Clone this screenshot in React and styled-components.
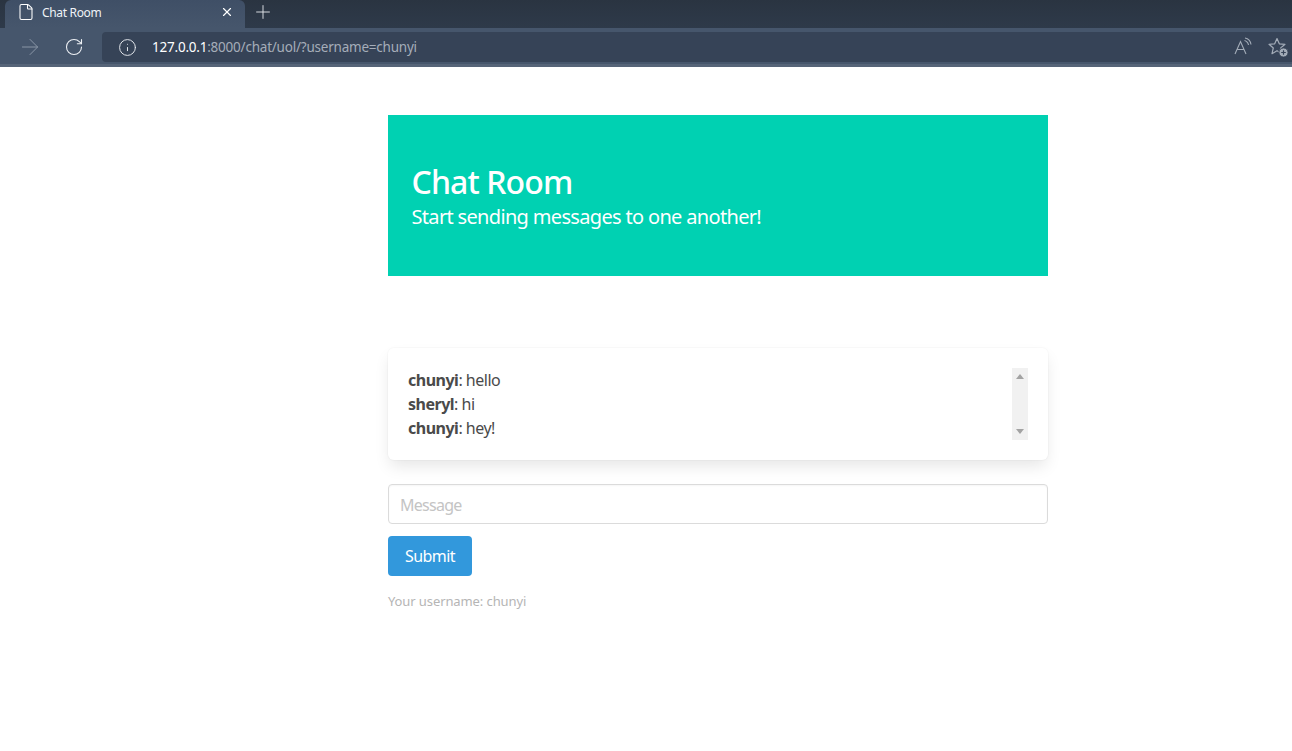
import React from "react"
import styled, { createGlobalStyle } from "styled-components"
import { X, Plus, ArrowRight, RotateCw, Info, File } from "lucide-react"

const App = () => {
  return (
    <>
      <GlobalStyle />
      <Browser>
        <TabStrip>
          <Tab>
            <File size={18} strokeWidth={1.4} />
            <TabTitle>Chat Room</TabTitle>
            <TabClose>
              <X size={14} strokeWidth={2} />
            </TabClose>
          </Tab>
          <NewTab>
            <Plus size={22} strokeWidth={1} />
          </NewTab>
        </TabStrip>
        <Toolbar>
          <NavButton $dim>
            <ArrowRight size={26} strokeWidth={0.9} />
          </NavButton>
          <NavButton>
            <RotateCw size={20} strokeWidth={1.3} />
          </NavButton>
          <AddressBar>
            <Info size={19} strokeWidth={1.2} />
            <Url>
              <UrlHost>127.0.0.1</UrlHost>:8000/chat/uol/?username=chunyi
            </Url>
            <ToolIcons>
              <svg width="20" height="20" viewBox="0 0 20 20" fill="none" stroke="#a3acb8" strokeWidth="1.1">
                <path d="M2 17 L7.5 4.5 L13 17 M4 12.5 H11" />
                <path d="M11.5 3.5 C13.5 4 15 5.5 15.5 8 M12 1 C15 1.5 17.5 4 18 7.5" />
              </svg>
              <svg width="22" height="22" viewBox="0 0 22 22" fill="none">
                <path d="M10 2.5 L12.3 7.8 L18 8.3 L13.7 12 L15 17.7 L10 14.7 L5 17.7 L6.3 12 L2 8.3 L7.7 7.8 Z" stroke="#a3acb8" strokeWidth="1.2" strokeLinejoin="round" />
                <circle cx="16.5" cy="16.5" r="4.6" fill="#a3acb8" stroke="#364357" strokeWidth="1" />
                <path d="M16.5 14.2 V18.8 M14.2 16.5 H18.8" stroke="#364357" strokeWidth="1.2" />
              </svg>
            </ToolIcons>
          </AddressBar>
        </Toolbar>
      </Browser>
      <Page>
        <Hero>
          <HeroTitle>Chat Room</HeroTitle>
          <HeroSubtitle>Start sending messages to one another!</HeroSubtitle>
        </Hero>
        <ChatBox>
          <Messages>
            <Message><strong>chunyi</strong>: hello</Message>
            <Message><strong>sheryl</strong>: hi</Message>
            <Message><strong>chunyi</strong>: hey!</Message>
          </Messages>
          <Scrollbar>
            <ArrowUp />
            <ArrowDown />
          </Scrollbar>
        </ChatBox>
        <MessageInput placeholder="Message" />
        <SubmitButton>Submit</SubmitButton>
        <Help>Your username: chunyi</Help>
      </Page>
    </>
  )
}

export default App

const GlobalStyle = createGlobalStyle`
  html, body {
    margin: 0;
    height: 100%;
    overflow: hidden;
    background: #fff;
    font-family: "Noto Sans", "Open Sans", sans-serif;
  }

  * {
    box-sizing: border-box;
  }
`

const Browser = styled.div`
  height: 67px;
  background: #2b3646;
  border-bottom: 3px solid #566478;
`

const TabStrip = styled.div`
  display: flex;
  align-items: flex-end;
  height: 28px;
  padding-left: 5px;
  background: linear-gradient(#2a3441, #2e3a4a);
`

const Tab = styled.div`
  display: flex;
  align-items: center;
  gap: 7px;
  width: 240px;
  height: 28px;
  padding: 0 11px 4px 12px;
  color: #fff;
  background: linear-gradient(#3f4f66, #46566c);
  border-radius: 6px 6px 0 0;
`

const TabTitle = styled.span`
  flex: 1;
  font-size: 12px;
  letter-spacing: -0.33px;
  color: #f0f3f7;
`

const TabClose = styled.span`
  display: flex;
`

const NewTab = styled.div`
  display: flex;
  align-items: center;
  height: 28px;
  padding: 0 0 4px 7px;
  color: #e5e8ec;
`

const Toolbar = styled.div`
  display: flex;
  height: 36px;
  padding: 4px 0 2px 17px;
  background: #46566c;
`

const NavButton = styled.div`
  display: flex;
  align-items: center;
  justify-content: center;
  width: 26px;
  margin-right: 18px;
  color: ${(props) => (props.$dim ? "#8b97a8" : "#eef1f5")};
`

const AddressBar = styled.div`
  display: flex;
  flex: 1;
  align-items: center;
  gap: 15px;
  height: 30px;
  margin-left: -3px;
  padding: 0 3px 0 16px;
  color: #e8ebf0;
  background: #364357;
  border-radius: 4px 0 0 4px;
`

const Url = styled.span`
  flex: 1;
  font-size: 13.5px;
  letter-spacing: -0.22px;
  color: #a5adb9;
`

const UrlHost = styled.span`
  color: #fff;
`

const ToolIcons = styled.div`
  display: flex;
  align-items: center;
  gap: 14px;
`

const Page = styled.main`
  display: flex;
  flex-direction: column;
  align-items: flex-start;
  width: 660px;
  margin-left: 388px;
  padding-top: 48px;
  color: #4a4a4a;
`

const Hero = styled.section`
  display: flex;
  flex-direction: column;
  justify-content: center;
  width: 100%;
  height: 161px;
  padding: 3px 24px 0 23.5px;
  color: #fff;
  background: #00d1b2;
`

const HeroTitle = styled.h1`
  margin: 0;
  font-size: 32px;
  font-weight: 500;
  line-height: 40px;
  letter-spacing: -0.9px;
`

const HeroSubtitle = styled.h2`
  margin: 0;
  font-size: 20px;
  font-weight: 400;
  line-height: 30px;
  letter-spacing: -0.67px;
`

const ChatBox = styled.div`
  display: flex;
  justify-content: space-between;
  width: 100%;
  height: 112px;
  margin-top: 72px;
  padding: 20px;
  background: #fff;
  border-radius: 6px;
  box-shadow: 0 8px 16px -2px rgba(10, 10, 10, 0.1), 0 0 0 1px rgba(10, 10, 10, 0.02);
`

const Messages = styled.div`
  font-size: 16px;
  line-height: 24px;
`

const Message = styled.div`
  letter-spacing: -0.5px;
`

const Scrollbar = styled.div`
  display: flex;
  flex-direction: column;
  justify-content: space-between;
  align-items: center;
  width: 16px;
  height: 72px;
  padding: 6px 0;
  background: #f1f1f1;
`

const ArrowUp = styled.span`
  width: 0;
  height: 0;
  border-left: 4px solid transparent;
  border-right: 4px solid transparent;
  border-bottom: 5px solid #a3a3a3;
`

const ArrowDown = styled.span`
  width: 0;
  height: 0;
  border-left: 4px solid transparent;
  border-right: 4px solid transparent;
  border-top: 5px solid #a3a3a3;
`

const MessageInput = styled.input`
  width: 100%;
  height: 40px;
  margin-top: 24px;
  padding: 2px 11px 0;
  font-family: inherit;
  font-size: 16px;
  letter-spacing: -0.73px;
  color: #363636;
  background: #fff;
  border: 1px solid #dbdbdb;
  border-radius: 4px;
  box-shadow: inset 0 1px 2px rgba(10, 10, 10, 0.04);

  &::placeholder {
    color: #c4c4c4;
  }
`

const SubmitButton = styled.button`
  width: 84px;
  height: 40px;
  margin-top: 12px;
  padding: 0;
  font-family: inherit;
  font-size: 16px;
  letter-spacing: -0.6px;
  color: #fff;
  background: #3298dc;
  border: none;
  border-radius: 4px;
`

const Help = styled.p`
  margin: 16px 0 0;
  font-size: 13px;
  line-height: 18px;
  letter-spacing: -0.1px;
  color: #b5b5b5;
`
